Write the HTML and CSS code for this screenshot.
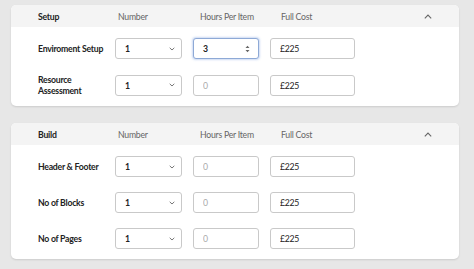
FILE: index.html
```html
<!DOCTYPE html>
<html lang="en">
<head>
  <meta charset="UTF-8">
  <title>Cost Estimate</title>
  <link rel="stylesheet" href="styles.css">
</head>
<body>
  <div class="page">
    <section class="card">
      <div class="card-head grid">
        <span class="head-title">Setup</span>
        <span class="head-col col-num">Number</span>
        <span class="head-col col-hours">Hours Per Item</span>
        <span class="head-col col-cost">Full Cost</span>
        <svg class="toggle" width="8" height="5" viewBox="0 0 8 5"><path d="M0.8 4.3 L4 1.1 L7.2 4.3" fill="none" stroke="#666" stroke-width="1.1"/></svg>
      </div>
      <div class="card-body">
        <div class="grid row">
          <span class="row-label">Enviroment Setup</span>
          <div class="field select"><span>1</span><svg width="6" height="4" viewBox="0 0 6 4"><path d="M0.7 0.8 L3 3 L5.3 0.8" fill="none" stroke="#777" stroke-width="1"/></svg></div>
          <div class="field focused"><span>3</span><svg width="5" height="8" viewBox="0 0 5 8"><path d="M0.5 3 L2.5 0.8 L4.5 3 Z M0.5 5 L2.5 7.2 L4.5 5 Z" fill="#666"/></svg></div>
          <input class="field" type="text" value="£225" readonly>
        </div>
        <div class="grid row">
          <span class="row-label">Resource Assessment</span>
          <div class="field select"><span>1</span><svg width="6" height="4" viewBox="0 0 6 4"><path d="M0.7 0.8 L3 3 L5.3 0.8" fill="none" stroke="#777" stroke-width="1"/></svg></div>
          <input class="field" type="text" placeholder="0">
          <input class="field" type="text" value="£225" readonly>
        </div>
      </div>
    </section>

    <section class="card">
      <div class="card-head grid">
        <span class="head-title">Build</span>
        <span class="head-col col-num">Number</span>
        <span class="head-col col-hours">Hours Per Item</span>
        <span class="head-col col-cost">Full Cost</span>
        <svg class="toggle" width="8" height="5" viewBox="0 0 8 5"><path d="M0.8 4.3 L4 1.1 L7.2 4.3" fill="none" stroke="#666" stroke-width="1.1"/></svg>
      </div>
      <div class="card-body">
        <div class="grid row">
          <span class="row-label">Header &amp; Footer</span>
          <div class="field select"><span>1</span><svg width="6" height="4" viewBox="0 0 6 4"><path d="M0.7 0.8 L3 3 L5.3 0.8" fill="none" stroke="#777" stroke-width="1"/></svg></div>
          <input class="field" type="text" placeholder="0">
          <input class="field" type="text" value="£225" readonly>
        </div>
        <div class="grid row">
          <span class="row-label">No of Blocks</span>
          <div class="field select"><span>1</span><svg width="6" height="4" viewBox="0 0 6 4"><path d="M0.7 0.8 L3 3 L5.3 0.8" fill="none" stroke="#777" stroke-width="1"/></svg></div>
          <input class="field" type="text" placeholder="0">
          <input class="field" type="text" value="£225" readonly>
        </div>
        <div class="grid row">
          <span class="row-label">No of Pages</span>
          <div class="field select"><span>1</span><svg width="6" height="4" viewBox="0 0 6 4"><path d="M0.7 0.8 L3 3 L5.3 0.8" fill="none" stroke="#777" stroke-width="1"/></svg></div>
          <input class="field" type="text" placeholder="0">
          <input class="field" type="text" value="£225" readonly>
        </div>
      </div>
    </section>
  </div>
</body>
</html>
```

FILE: styles.css
```css
html, body { margin: 0; height: 100%; }
body {
  background: #e7e7e7;
  font-family: Lato, 'Open Sans', Arial, sans-serif;
  font-size: 8.7px;
  letter-spacing: -0.25px;
  color: #222;
}
.page {
  width: 448px;
  padding: 5px 0 0 11px;
  display: flex;
  flex-direction: column;
  gap: 17px;
}
.card {
  background: #fff;
  border-radius: 5px;
  box-shadow: 0 1px 2px rgba(0,0,0,0.12);
  overflow: hidden;
}
.grid {
  display: grid;
  grid-template-columns: 66px 67px 66px 85px 1fr;
  column-gap: 11px;
  align-items: center;
  padding: 0 27px;
}
.card-head { height: 22px; background: #f4f4f4; white-space: nowrap; }
.head-title { font-weight: bold; color: #222; }
.head-col { color: #666; }
.col-num { padding-left: 3px; }
.col-hours { padding-left: 7px; }
.col-cost { padding-left: 11px; }
.toggle { justify-self: end; }
.card-body {
  padding: 11px 0 10px;
  display: flex;
  flex-direction: column;
  gap: 15px;
}
.row { min-height: 21px; }
.row-label { font-weight: bold; line-height: 11px; margin-right: -11px; }
.field {
  box-sizing: border-box;
  height: 21px;
  width: 100%;
  border: 1px solid #c9c9c9;
  border-radius: 3px;
  background: #fff;
  padding: 0 9px;
  font: inherit;
  letter-spacing: inherit;
  color: #222;
  display: flex;
  align-items: center;
  justify-content: space-between;
  outline: none;
}
.field::placeholder { color: #aaa; }
.select span, .focused span { font-weight: bold; }
.select { padding-right: 6px; }
.focused {
  border-color: #8ea9d6;
  box-shadow: 0 0 2px 1px rgba(110,150,220,0.35);
  padding-right: 8px;
}
```
